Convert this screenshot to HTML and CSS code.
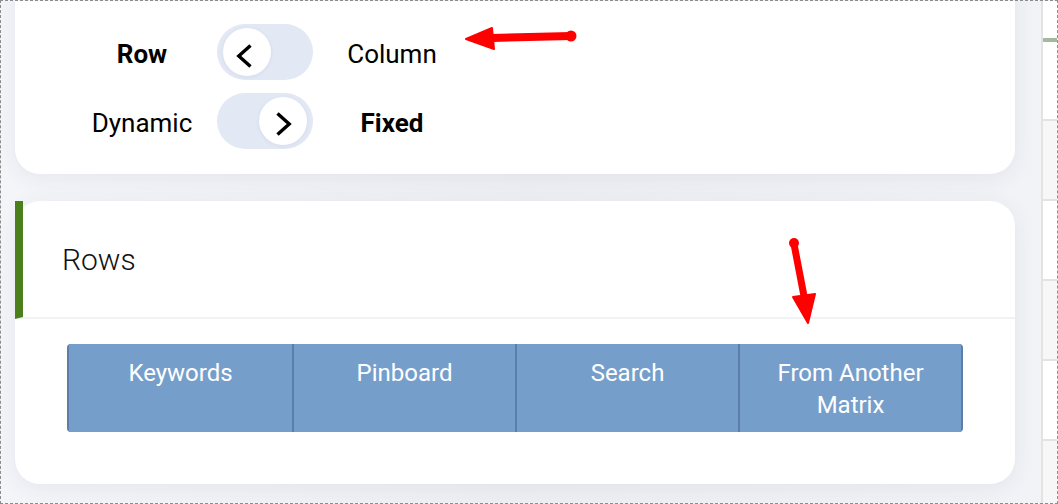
FILE: index.html
```html
<!DOCTYPE html>
<html lang="en">
<head>
<meta charset="utf-8">
<title>Matrix settings</title>
<link rel="stylesheet" href="styles.css">
</head>
<body>
<div class="frame">
  <main class="main">
    <section class="card card-options">
      <div class="option-grid">
        <span class="opt-label bold">Row</span>
        <div class="toggle">
          <span class="knob knob-left">
            <svg width="48" height="48" viewBox="0 0 48 48"><path d="M27.5 17.5 L15.8 28 L27.5 38.5" fill="none" stroke="#000" stroke-width="3.4"/></svg>
          </span>
        </div>
        <span class="opt-label">Column</span>

        <span class="opt-label">Dynamic</span>
        <div class="toggle">
          <span class="knob knob-right">
            <svg width="48" height="48" viewBox="0 0 48 48"><path d="M18.5 16.5 L30.2 27 L18.5 37.5" fill="none" stroke="#000" stroke-width="3.4"/></svg>
          </span>
        </div>
        <span class="opt-label bold">Fixed</span>
      </div>
    </section>

    <section class="card card-rows">
      <header class="card-header">
        <h2 class="card-title">Rows</h2>
      </header>
      <div class="card-body">
        <div class="btn-group">
          <button class="btn">Keywords</button>
          <button class="btn">Pinboard</button>
          <button class="btn">Search</button>
          <button class="btn">From Another Matrix</button>
        </div>
      </div>
    </section>
  </main>
  <aside class="side">
    <div class="side-top"></div>
    <div class="side-row first"></div>
    <div class="side-row alt"></div>
    <div class="side-row"></div>
    <div class="side-row alt"></div>
    <div class="side-row"></div>
    <div class="side-row alt"></div>
  </aside>
  <svg class="annotations" width="1058" height="504" viewBox="0 0 1058 504">
    <g fill="#ff0000" stroke="#ff0000" stroke-linecap="round" stroke-linejoin="round">
      <path d="M571 36 L492 38" stroke-width="8" fill="none"/>
      <circle cx="571" cy="36" r="5.5" stroke="none"/>
      <path d="M466 39 L492 28 L494 49 Z" stroke-width="2"/>
      <path d="M794 244 L804 296" stroke-width="7" fill="none"/>
      <circle cx="794" cy="243" r="5" stroke="none"/>
      <path d="M793 297 L815 294 L808 323 Z" stroke-width="2"/>
    </g>
  </svg>
</div>
</body>
</html>
```

FILE: styles.css
```css
* { box-sizing: border-box; }

html, body {
  margin: 0;
  padding: 0;
  background: #f2f3f7;
}

body {
  font-family: Roboto, "Noto Sans", Arial, sans-serif;
  color: #000;
}

.frame {
  position: relative;
  width: 1058px;
  height: 504px;
  border: 1px dashed #8c8c8c;
  overflow: hidden;
  display: flex;
  background: linear-gradient(90deg, #f4f5f9 0%, #eeeff3 50%, #f2f3f7 100%);
}

.main {
  width: 1040px;
  flex: none;
  padding-left: 14px;
  display: flex;
  flex-direction: column;
}

.card {
  width: 1000px;
  background: #fff;
  border-radius: 25px;
  box-shadow: 0 4px 22px rgba(40, 50, 90, 0.07);
}

.card-options {
  margin-top: -40px;
  padding: 63px 0 25px 52px;
}

.option-grid {
  display: grid;
  grid-template-columns: 150px 96px 158px;
  row-gap: 13px;
  align-items: center;
}

.opt-label {
  text-align: center;
  font-size: 26px;
  line-height: 30px;
  padding-top: 3px;
}

.opt-label.bold { font-weight: 700; }

.toggle {
  position: relative;
  width: 96px;
  height: 56px;
  border-radius: 28px;
  background: #e3e8f5;
}

.knob {
  position: absolute;
  top: 4px;
  width: 48px;
  height: 48px;
  border-radius: 50%;
  background: #fff;
  box-shadow: 0 1px 4px rgba(60, 70, 110, 0.08);
  display: block;
}

.knob svg { display: block; }
.knob-left { left: 6px; }
.knob-right { left: 42px; }

.card-rows {
  margin-top: 27px;
  height: 283px;
}

.card-header {
  height: 118px;
  border-left: 8px solid #4a7f1c;
  border-bottom: 2px solid #f1f2f4;
  display: flex;
  align-items: center;
  padding-left: 39px;
}

.card-title {
  margin: 0;
  font-size: 30px;
  font-weight: 300;
  color: #111;
}

.card-body {
  padding: 25px 52px 52px;
}

.btn-group {
  display: grid;
  grid-template-columns: repeat(4, 1fr);
  border-radius: 4px;
  overflow: hidden;
  border-left: 2px solid #5b7fa9;
  border-right: 2px solid #5b7fa9;
  background: #769ecb;
}

.btn {
  appearance: none;
  border: 0;
  background: #769ecb;
  color: #fff;
  font-family: inherit;
  font-size: 24px;
  line-height: 32px;
  padding: 13px 20px 11px;
  height: 88px;
  text-align: center;
  display: flex;
  justify-content: center;
  align-items: flex-start;
}

.btn + .btn { border-left: 2px solid #5b7fa9; }

.side {
  flex: 1;
  background: #fff;
  border-left: 2px solid #e3e3e3;
  display: flex;
  flex-direction: column;
}

.side-top {
  height: 41px;
  border-bottom: 4px solid #a3b89c;
  flex: none;
}

.side-row {
  height: 80px;
  flex: none;
  border-bottom: 2px solid #e3e3e3;
  background: #fff;
}

.side-row.first { height: 79px; }
.side-row.alt { background: #f7f7f7; }

.annotations {
  position: absolute;
  left: -1px;
  top: -1px;
  pointer-events: none;
}
```
